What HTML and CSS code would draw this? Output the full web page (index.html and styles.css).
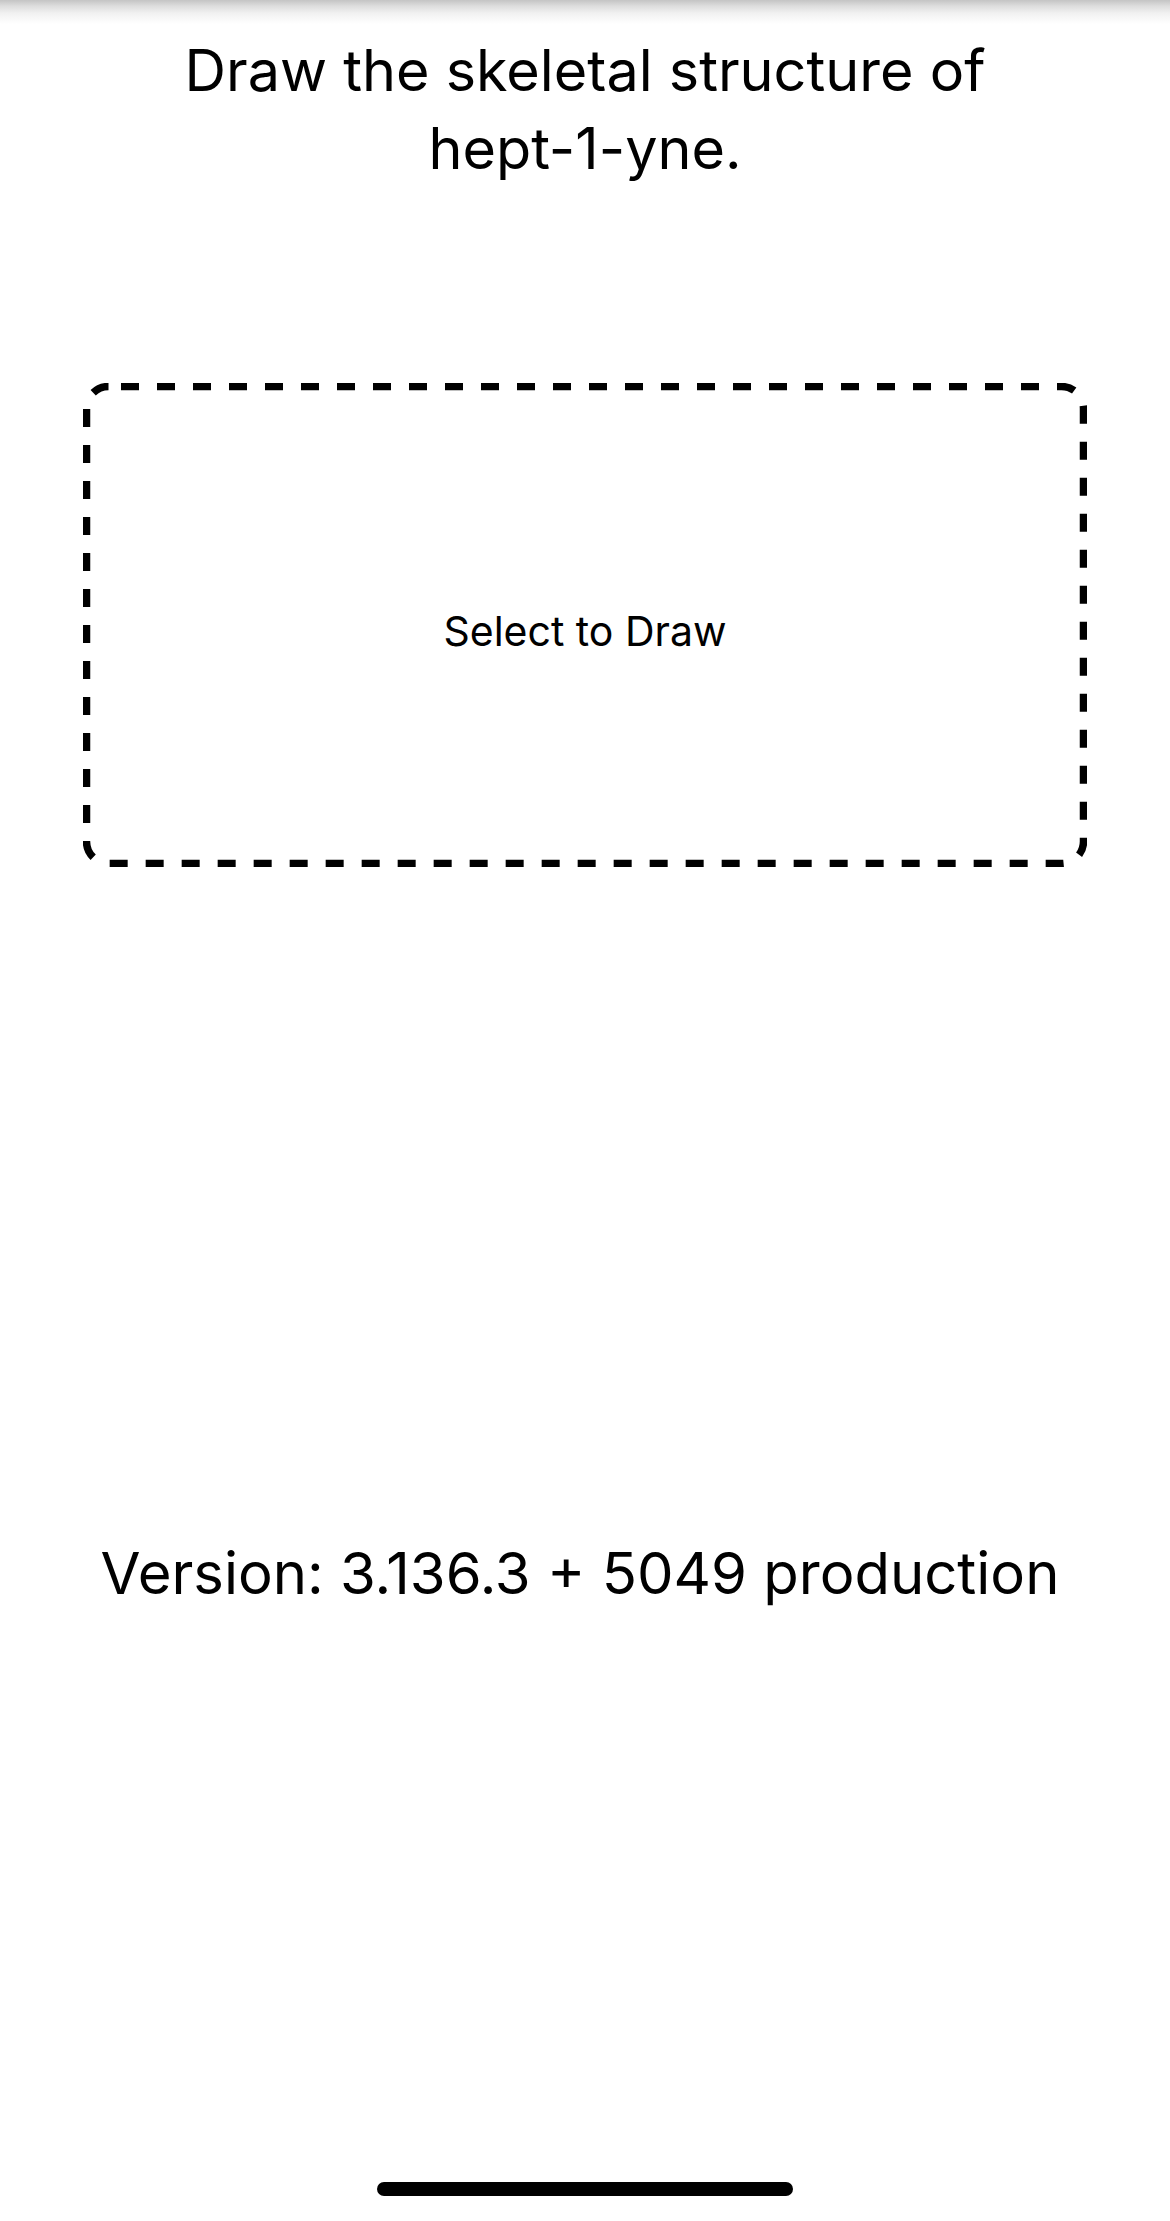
FILE: index.html
```html
<!DOCTYPE html>
<html lang="en">
<head>
<meta charset="utf-8">
<title>Draw the skeletal structure of hept-1-yne.</title>
<link rel="stylesheet" href="styles.css">
</head>
<body>
<div class="page">
  <div class="top-shadow"></div>
  <h1 class="prompt">Draw the skeletal structure of <span class="nowrap">hept-1-yne.</span></h1>
  <div class="draw-area">
    <svg class="draw-border" width="1004" height="484" viewBox="0 0 1004 484" aria-hidden="true">
      <rect x="3.5" y="3.5" width="997" height="477" rx="22" ry="22"/>
    </svg>
    <span class="draw-label">Select to Draw</span>
  </div>
  <p class="version">Version: 3.136.3 + 5049 production</p>
  <div class="home-indicator"></div>
</div>
</body>
</html>
```
FILE: styles.css
```css
html, body {
  margin: 0;
  padding: 0;
  background: #ffffff;
}

body {
  font-family: Inter, "Noto Sans", "Liberation Sans", sans-serif;
  color: #000000;
}

.page {
  width: 1170px;
  height: 2221px;
  display: flex;
  flex-direction: column;
  overflow: hidden;
}

.top-shadow {
  height: 24px;
  flex: none;
  background: linear-gradient(to bottom, #c4c4c4 0%, #dddddd 25%, #f1f1f1 55%, #ffffff 100%);
}

.prompt {
  margin: 7px 0 0;
  padding: 0 84px;
  font-size: 57.5px;
  font-weight: 400;
  line-height: 78px;
  text-align: center;
}

.nowrap {
  white-space: nowrap;
}

.draw-area {
  position: relative;
  margin: 196px 83px 0;
  height: 484px;
  flex: none;
  display: flex;
  align-items: center;
  justify-content: center;
}

.draw-border {
  position: absolute;
  inset: 0;
}

.draw-border rect {
  fill: none;
  stroke: #000000;
  stroke-width: 7.5;
  stroke-dasharray: 18 18;
  stroke-dashoffset: 23.5;
}

.draw-label {
  font-size: 41px;
  line-height: 50px;
  margin-top: 12px;
}

.version {
  margin: 672px 0 0;
  padding-right: 10px;
  font-size: 58px;
  line-height: 68px;
  text-align: center;
}

.home-indicator {
  align-self: center;
  margin-top: 575px;
  width: 416px;
  height: 14px;
  border-radius: 7px;
  background: #000000;
  flex: none;
}
```
